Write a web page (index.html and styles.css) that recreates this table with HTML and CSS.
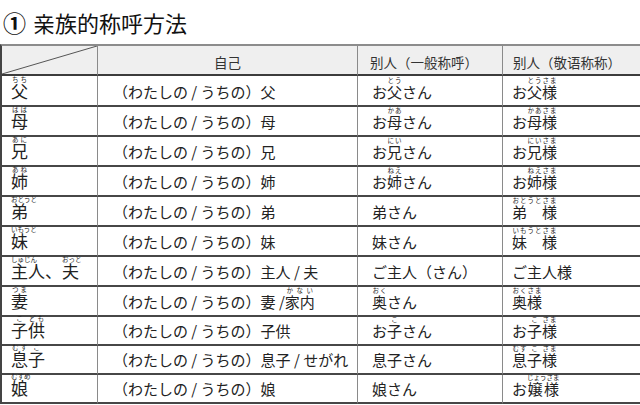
FILE: index.html
```html
<!DOCTYPE html>
<html lang="ja">
<head>
<meta charset="utf-8">
<title>亲族的称呼方法</title>
<link rel="stylesheet" href="styles.css">
</head>
<body>
<h1 class="title"><span class="num">①</span>亲族的称呼方法</h1>
<div class="table">
  <div class="hd diag"><svg class="slash" viewBox="0 0 100 100" preserveAspectRatio="none"><line x1="0" y1="100" x2="100" y2="0" vector-effect="non-scaling-stroke"/></svg></div>
  <div class="hd center">自己</div>
  <div class="hd">别人（一般称呼）</div>
  <div class="hd h4">别人（敬语称称）</div>

  <div class="c c1"><ruby>父<rt>ちち</rt></ruby></div>
  <div class="c c2">（わたしの / うちの）父</div>
  <div class="c c3">お<ruby>父<rt>とう</rt></ruby>さん</div>
  <div class="c c4">お<ruby>父<rt>とう</rt></ruby><ruby>様<rt>さま</rt></ruby></div>

  <div class="c c1"><ruby>母<rt>はは</rt></ruby></div>
  <div class="c c2">（わたしの / うちの）母</div>
  <div class="c c3">お<ruby>母<rt>かあ</rt></ruby>さん</div>
  <div class="c c4">お<ruby>母<rt>かあ</rt></ruby><ruby>様<rt>さま</rt></ruby></div>

  <div class="c c1"><ruby>兄<rt>あに</rt></ruby></div>
  <div class="c c2">（わたしの / うちの）兄</div>
  <div class="c c3">お<ruby>兄<rt>にい</rt></ruby>さん</div>
  <div class="c c4">お<ruby>兄<rt>にい</rt></ruby><ruby>様<rt>さま</rt></ruby></div>

  <div class="c c1"><ruby>姉<rt>あね</rt></ruby></div>
  <div class="c c2">（わたしの / うちの）姉</div>
  <div class="c c3">お<ruby>姉<rt>ねえ</rt></ruby>さん</div>
  <div class="c c4">お<ruby>姉<rt>ねえ</rt></ruby><ruby>様<rt>さま</rt></ruby></div>

  <div class="c c1"><ruby class="start">弟<rt>おとうと</rt></ruby></div>
  <div class="c c2">（わたしの / うちの）弟</div>
  <div class="c c3">弟さん</div>
  <div class="c c4"><ruby>弟　<rt>おとうと</rt></ruby><ruby>様<rt>さま</rt></ruby></div>

  <div class="c c1"><ruby class="start">妹<rt>いもうと</rt></ruby></div>
  <div class="c c2">（わたしの / うちの）妹</div>
  <div class="c c3">妹さん</div>
  <div class="c c4"><ruby>妹　<rt>いもうと</rt></ruby><ruby>様<rt>さま</rt></ruby></div>

  <div class="c c1"><ruby class="start">主人<rt>しゅじん</rt></ruby>、<ruby class="start">夫<rt>おっと</rt></ruby></div>
  <div class="c c2">（わたしの / うちの）主人 / 夫</div>
  <div class="c c3">ご主人（さん）</div>
  <div class="c c4">ご主人様</div>

  <div class="c c1"><ruby>妻<rt>つま</rt></ruby></div>
  <div class="c c2">（わたしの / うちの）妻 / <ruby>家内<rt>かない</rt></ruby></div>
  <div class="c c3"><ruby>奥<rt>おく</rt></ruby>さん</div>
  <div class="c c4"><ruby>奥<rt>おく</rt></ruby><ruby>様<rt>さま</rt></ruby></div>

  <div class="c c1"><ruby>子<rt>こ</rt></ruby><ruby>供<rt>ども</rt></ruby></div>
  <div class="c c2">（わたしの / うちの）子供</div>
  <div class="c c3">お<ruby>子<rt>こ</rt></ruby>さん</div>
  <div class="c c4">お<ruby>子<rt>こ</rt></ruby><ruby>様<rt>さま</rt></ruby></div>

  <div class="c c1"><ruby>息<rt>むす</rt></ruby><ruby>子<rt>こ</rt></ruby></div>
  <div class="c c2">（わたしの / うちの）息子 / せがれ</div>
  <div class="c c3">息子さん</div>
  <div class="c c4"><ruby>息<rt>むす</rt></ruby><ruby>子<rt>こ</rt></ruby><ruby>様<rt>さま</rt></ruby></div>

  <div class="c c1"><ruby class="start">娘<rt>むすめ</rt></ruby></div>
  <div class="c c2">（わたしの / うちの）娘</div>
  <div class="c c3">娘さん</div>
  <div class="c c4">お<ruby>嬢様<rt>じょうさま</rt></ruby></div>
</div>
</body>
</html>
```

FILE: styles.css
```css
* {
  box-sizing: border-box;
  margin: 0;
  padding: 0;
}

html, body {
  background: #ffffff;
}

body {
  width: 640px;
  height: 405px;
  overflow: hidden;
  color: #222222;
  font-family: "Noto Sans CJK JP", sans-serif;
}

.title {
  height: 44px;
  padding: 7px 0 0 3px;
  font-family: "Noto Sans CJK SC", sans-serif;
  font-size: 22px;
  font-weight: 400;
  line-height: 30px;
  color: #111111;
}

.num {
  display: inline-block;
  margin-right: 7px;
  font-size: 23px;
  font-weight: 700;
}

.table {
  display: grid;
  grid-template-columns: 96px 260px 145px 1fr;
  grid-template-rows: 30px 31px repeat(7, 30px) repeat(3, 29px);
  border-top: 2px solid #8c8c8c;
  border-left: 2px solid #444444;
}

.hd {
  display: flex;
  align-items: center;
  padding: 3px 0 0 12px;
  background: #efefef;
  border-bottom: 2px solid #3c3c3c;
  border-right: 1px solid #8a8a8a;
  font-family: "Noto Sans CJK SC", sans-serif;
  font-size: 13.5px;
  color: #333333;
  white-space: nowrap;
}

.hd.center {
  justify-content: center;
  padding-left: 0;
}

.hd.h4 {
  padding-left: 10px;
  border-right: none;
}

.hd.diag {
  padding: 0;
}

.slash {
  display: block;
  width: 100%;
  height: 100%;
}

.slash line {
  stroke: #555555;
  stroke-width: 1;
}

.c {
  display: flex;
  align-items: flex-end;
  padding-bottom: 4px;
  border-bottom: 2px solid #474747;
  border-right: 1px solid #8a8a8a;
  font-size: 15px;
  line-height: 18px;
  white-space: nowrap;
  color: #222222;
}

.c1 {
  padding-left: 9px;
  font-size: 17px;
  line-height: 20px;
}

.c2 {
  padding-left: 15px;
}

.c3 {
  padding-left: 14px;
}

.c4 {
  padding-left: 9px;
  border-right: none;
}

rt {
  font-size: 6.5px;
  line-height: 9px;
  color: #222222;
}

ruby.start {
  ruby-align: start;
}
```
